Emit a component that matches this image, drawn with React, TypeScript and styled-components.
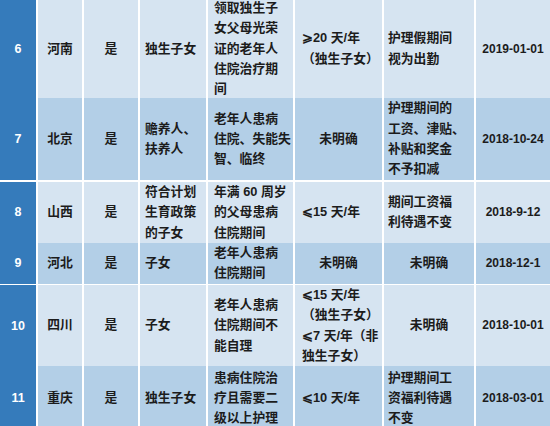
import * as React from "react";
import styled, { createGlobalStyle } from "styled-components";

const GlobalStyle = createGlobalStyle`
  html, body {
    margin: 0;
    padding: 0;
    background: #ffffff;
  }
  body {
    font-family: "Liberation Sans", "Noto Sans CJK SC", sans-serif;
  }
`;

const Viewport = styled.div`
  width: 550px;
  height: 426px;
  overflow: hidden;
  background: #ffffff;
`;

const Table = styled.div`
  display: flex;
  flex-direction: column;
  gap: 2px;
  margin-top: -2px;
  background: #ffffff;
`;

const Row = styled.div<{ $h: number; $tone: "light" | "dark" }>`
  display: grid;
  grid-template-columns: 36px 44px 54px 66px 85px 87px 90px 1fr;
  column-gap: 2px;
  height: ${(p) => p.$h}px;
  flex-shrink: 0;
  --cell-bg: ${(p) => (p.$tone === "light" ? "#d6e4f1" : "#b3cfe7")};
`;

const NumCell = styled.div`
  display: flex;
  align-items: center;
  justify-content: center;
  background: #357bbb;
  color: #ffffff;
  font-weight: 700;
  font-size: 12.5px;
`;

const Cell = styled.div<{ $align?: "left" | "center"; $pl?: number }>`
  display: flex;
  align-items: center;
  justify-content: ${(p) => (p.$align === "center" ? "center" : "flex-start")};
  text-align: ${(p) => (p.$align === "center" ? "center" : "left")};
  padding-left: ${(p) => (p.$align === "center" ? 0 : p.$pl ?? 6)}px;
  min-width: 0;
  background: var(--cell-bg);
  color: #1c1c1c;
  font-size: 12.8px;
  font-weight: 700;
  line-height: 20.3px;
  white-space: pre;
  overflow: visible;
`;

const DateCell = styled(Cell)`
  font-size: 12px;
`;

type Align = "left" | "center";

interface IRow {
  no: string;
  h: number;
  prov: string;
  who: string;
  whoAlign: Align;
  cond: string;
  days: string;
  daysAlign: Align;
  pay: string;
  payAlign: Align;
  date: string;
}

const rows: IRow[] = [
  {
    no: "6",
    h: 98,
    prov: "河南",
    who: "独生子女",
    whoAlign: "left",
    cond: "领取独生子\n女父母光荣\n证的老年人\n住院治疗期\n间",
    days: "⩾20 天/年\n（独生子女）",
    daysAlign: "left",
    pay: "护理假期间\n视为出勤",
    payAlign: "left",
    date: "2019-01-01",
  },
  {
    no: "7",
    h: 82,
    prov: "北京",
    who: "赡养人、\n扶养人",
    whoAlign: "left",
    cond: "老年人患病\n住院、失能失\n智、临终",
    days: "未明确",
    daysAlign: "center",
    pay: "护理期间的\n工资、津贴、\n补贴和奖金\n不予扣减",
    payAlign: "left",
    date: "2018-10-24",
  },
  {
    no: "8",
    h: 59,
    prov: "山西",
    who: "符合计划\n生育政策\n的子女",
    whoAlign: "left",
    cond: "年满 60 周岁\n的父母患病\n住院期间",
    days: "⩽15 天/年",
    daysAlign: "left",
    pay: "期间工资福\n利待遇不变",
    payAlign: "left",
    date: "2018-9-12",
  },
  {
    no: "9",
    h: 40,
    prov: "河北",
    who: "子女",
    whoAlign: "left",
    cond: "老年人患病\n住院期间",
    days: "未明确",
    daysAlign: "center",
    pay: "未明确",
    payAlign: "center",
    date: "2018-12-1",
  },
  {
    no: "10",
    h: 79,
    prov: "四川",
    who: "子女",
    whoAlign: "left",
    cond: "老年人患病\n住院期间不\n能自理",
    days: "⩽15 天/年\n（独生子女）\n⩽7 天/年（非\n独生子女）",
    daysAlign: "left",
    pay: "未明确",
    payAlign: "center",
    date: "2018-10-01",
  },
  {
    no: "11",
    h: 64,
    prov: "重庆",
    who: "独生子女",
    whoAlign: "left",
    cond: "患病住院治\n疗且需要二\n级以上护理",
    days: "⩽10 天/年",
    daysAlign: "left",
    pay: "护理期间工\n资福利待遇\n不变",
    payAlign: "left",
    date: "2018-03-01",
  },
];

export default function App() {
  return (
    <Viewport>
      <GlobalStyle />
      <Table>
        {rows.map((r, i) => (
          <Row key={r.no} $h={r.h} $tone={i % 2 === 0 ? "light" : "dark"}>
            <NumCell>{r.no}</NumCell>
            <Cell $align="center">{r.prov}</Cell>
            <Cell $align="center">是</Cell>
            <Cell $align={r.whoAlign} $pl={5}>{r.who}</Cell>
            <Cell $align="left" $pl={6}>{r.cond}</Cell>
            <Cell $align={r.daysAlign} $pl={7}>{r.days}</Cell>
            <Cell $align={r.payAlign} $pl={4}>{r.pay}</Cell>
            <DateCell $align="center">{r.date}</DateCell>
          </Row>
        ))}
      </Table>
    </Viewport>
  );
}
